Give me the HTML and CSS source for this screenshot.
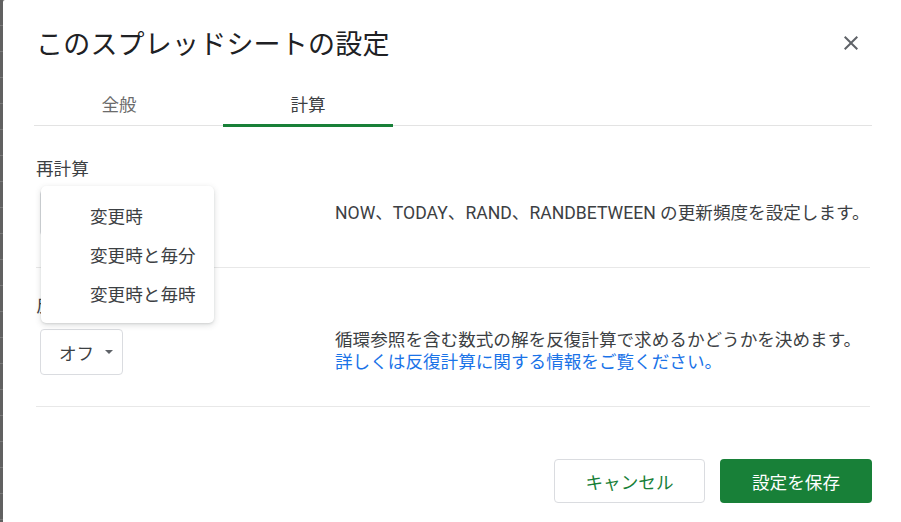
FILE: index.html
```html
<!DOCTYPE html>
<html lang="ja">
<head>
<meta charset="utf-8">
<title>このスプレッドシートの設定</title>
<link rel="stylesheet" href="styles.css">
</head>
<body>
<div class="backdrop">
  <div class="dialog">
    <header class="head">
      <h1 class="title">このスプレッドシートの設定</h1>
      <button class="close" aria-label="閉じる">
        <svg viewBox="0 0 24 24" width="24" height="24"><path d="M19 6.41L17.59 5 12 10.59 6.41 5 5 6.41 10.59 12 5 17.59 6.41 19 12 13.41 17.59 19 19 17.59 13.41 12z" fill="#5f6368"/></svg>
      </button>
    </header>
    <nav class="tabs">
      <div class="tab">全般</div>
      <div class="tab active">計算</div>
    </nav>
    <section class="sec">
      <div class="label">再計算</div>
      <div class="row center">
        <div class="ctrl">
          <div class="select wide">変更時<span class="caret"></span></div>
          <div class="menu">
            <div class="item">変更時</div>
            <div class="item">変更時と毎分</div>
            <div class="item">変更時と毎時</div>
          </div>
        </div>
        <div class="desc">NOW、TODAY、RAND、RANDBETWEEN の更新頻度を設定します。</div>
      </div>
    </section>
    <section class="sec sec2">
      <div class="label">反復計算</div>
      <div class="row">
        <div class="ctrl">
          <div class="select">オフ<span class="caret"></span></div>
        </div>
        <div class="desc">循環参照を含む数式の解を反復計算で求めるかどうかを決めます。<br><a class="link" href="#">詳しくは反復計算に関する情報をご覧ください。</a></div>
      </div>
    </section>
    <footer class="foot">
      <button class="btn cancel">キャンセル</button>
      <button class="btn save">設定を保存</button>
    </footer>
  </div>
</div>
</body>
</html>
```

FILE: styles.css
```css
* { box-sizing: border-box; }
html, body { margin: 0; padding: 0; }
body {
  width: 901px;
  height: 522px;
  overflow: hidden;
  background: #616161;
  font-family: Roboto, "Noto Sans CJK JP", sans-serif;
  color: #3c4043;
}
.backdrop {
  height: 522px;
  background: repeating-linear-gradient(to bottom, #616161 0, #616161 25px, #7a7a7a 25px, #7a7a7a 26px);
  padding-left: 3px;
}
.dialog {
  width: 898px;
  height: 522px;
  background: #fff;
  padding: 0 29px 0 31px;
  border-top-left-radius: 2px;
}
.head {
  display: flex;
  align-items: center;
  justify-content: space-between;
  padding-top: 25px;
}
.title {
  margin: 0 0 0 2px;
  font-family: "Noto Sans CJK JP", sans-serif;
  font-size: 27px;
  line-height: 36px;
  font-weight: 400;
  color: #202124;
  letter-spacing: 0.2px;
}
.close {
  width: 24px;
  height: 24px;
  padding: 0;
  border: 0;
  background: none;
  margin-right: 9px;
  display: flex;
}
.tabs {
  display: flex;
  gap: 19px;
  margin-top: 17px;
  border-bottom: 1px solid #e3e3e3;
}
.tab {
  width: 170px;
  height: 49px;
  margin-bottom: -2px;
  padding-top: 14px;
  text-align: center;
  font-family: "Noto Sans CJK JP", sans-serif;
  font-size: 17.6px;
  line-height: 24px;
  color: #6b6b6b;
  border-bottom: 3px solid transparent;
}
.tab.active {
  color: #3c4043;
  border-bottom-color: #188038;
}
.sec {
  margin: 0 2px;
  padding: 30px 0 31px;
  border-bottom: 1px solid #e8e8e8;
}
.sec2 { padding-top: 25px; }
.label {
  font-family: "Noto Sans CJK JP", sans-serif;
  font-size: 17.6px;
  line-height: 24px;
  color: #3c4043;
  margin-left: 0;
}
.row {
  display: flex;
  align-items: flex-start;
  margin-top: 10px;
}
.sec2 .row { margin-top: 12px; }
.row.center { align-items: center; }
.ctrl {
  position: relative;
  width: 299px;
  flex: none;
}
.select {
  display: inline-flex;
  align-items: center;
  height: 46px;
  width: 83px;
  margin-left: 4px;
  padding-left: 18px;
  border: 1px solid #dadce0;
  border-radius: 4px;
  font-family: "Noto Sans CJK JP", sans-serif;
  font-size: 17.6px;
  color: #3c4043;
}
.select.wide { width: 150px; }
.caret {
  margin-left: 11px;
  width: 0;
  height: 0;
  border-left: 4px solid transparent;
  border-right: 4px solid transparent;
  border-top: 4px solid #5f6368;
}
.menu {
  position: absolute;
  left: 5px;
  top: -4px;
  width: 173px;
  padding: 10px 0 10px;
  background: #fff;
  border-radius: 5px;
  box-shadow: 0 2px 6px rgba(60, 64, 67, 0.18), 0 1px 2px rgba(60, 64, 67, 0.12);
  z-index: 2;
}
.item {
  height: 39px;
  line-height: 39px;
  padding-left: 49px;
  font-family: "Noto Sans CJK JP", sans-serif;
  font-size: 17.6px;
  color: #3c4043;
}
.desc {
  font-size: 17.6px;
  line-height: 22px;
  color: #3c4043;
  white-space: nowrap;
}
.link {
  color: #1a73e8;
  text-decoration: none;
}
.foot {
  display: flex;
  justify-content: flex-end;
  gap: 15px;
  margin-top: 52px;
}
.btn {
  height: 44px;
  border-radius: 4px;
  font-family: "Noto Sans CJK JP", sans-serif;
  font-size: 17.6px;
  padding: 0;
}
.cancel {
  width: 151px;
  background: #fff;
  border: 1px solid #dadce0;
  color: #188038;
}
.save {
  width: 152px;
  background: #188038;
  border: 0;
  color: #fff;
}
```
